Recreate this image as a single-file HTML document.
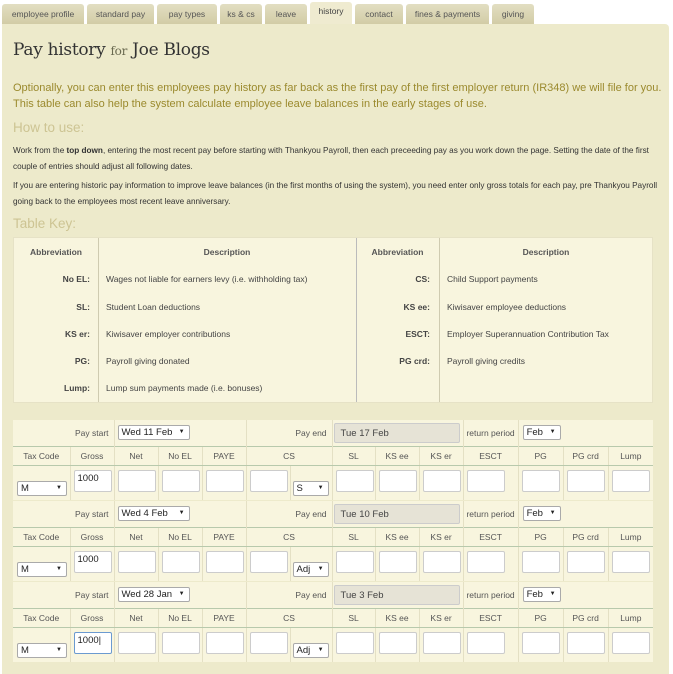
<!DOCTYPE html>
<html><head><meta charset="utf-8"><style>
*{box-sizing:border-box;margin:0;padding:0}
body{width:673px;height:663px;overflow:hidden;background:#fff;font-family:"Liberation Sans",sans-serif;position:relative}
.tabs{position:absolute;top:4px;left:2px;height:20px}
.tab{position:absolute;top:0;height:20px;background:linear-gradient(#e2dec2,#d2cca6);border-radius:3px 3px 0 0;font-size:8.5px;color:#555;text-align:center;line-height:20px}
.tab.on{background:#efebd0;top:-2px;height:22px;line-height:18px;color:#444}
.panel{position:absolute;left:2px;top:24px;width:667px;height:650px;background:#edeacb;border-radius:0 4px 0 0}
h1{position:absolute;left:13px;top:40px;font-family:"DejaVu Serif","Liberation Serif",serif;font-weight:normal;font-size:17px;color:#333;letter-spacing:-0.3px}
h1 small{font-size:12px;color:#6a6a50}
.intro{position:absolute;left:13px;top:80px;width:650px;font-size:11px;line-height:16px;color:#9b8a2e}
h2{position:absolute;left:13px;font-weight:normal;font-size:13.5px;color:#cdc493}
.p{position:absolute;left:13px;width:655px;font-size:8.2px;line-height:15.5px;color:#333}
.key{position:absolute;left:13px;top:237px;width:640px;height:166px;background:#f8f5de;border:1px solid #e6e2c6;font-size:8.5px;color:#444}
.key div{position:absolute}
.key b{font-weight:bold}
.vl{position:absolute;top:0;width:1px;height:164px;background:#cfcbb0}
table{position:absolute;left:13px;width:640px;border-collapse:collapse;table-layout:fixed;background:#f8f5de;font-size:8.5px;color:#555}
td{border-left:1px solid #e4e0c4;text-align:center;padding:0;vertical-align:middle}
tr.ps td{height:26px}
tr.ps td.r{text-align:right;padding-right:5px}
tr.hd td{height:19px;border-top:1.5px solid #b8c9ac;border-bottom:1.5px solid #b8c9ac}
tr.in td{height:35px;position:relative}
.sel{display:inline-block;background:#fff;border:1px solid #aaa;border-radius:2px;font-size:9.5px;color:#222;text-align:left;padding-left:3px;position:relative;height:15px;line-height:13px}
.sel:after{content:"▼";position:absolute;right:4px;top:0;font-size:6px}
.box{position:absolute;left:3px;top:4px;width:38px;height:22px;background:#fff;border:1px solid #ccc;border-radius:2px;font-size:9.5px;color:#222;text-align:left;padding:2px 3px}
.dis{display:inline-block;width:126px;height:20px;background:#e6e3d6;border:1px solid #ccc;border-radius:2px;font-size:9.5px;color:#444;text-align:left;padding:4px 6px;line-height:11px}
</style></head><body>
<div class="tabs">
<div class="tab" style="left:0;width:82px">employee profile</div>
<div class="tab" style="left:85px;width:67px">standard pay</div>
<div class="tab" style="left:155px;width:60px">pay types</div>
<div class="tab" style="left:218px;width:42px">ks &amp; cs</div>
<div class="tab" style="left:263px;width:42px">leave</div>
<div class="tab on" style="left:308px;width:42px">history</div>
<div class="tab" style="left:353px;width:48px">contact</div>
<div class="tab" style="left:404px;width:83px">fines &amp; payments</div>
<div class="tab" style="left:490px;width:42px">giving</div>
</div>
<div class="panel"></div>
<h1>Pay history <small>for</small> Joe Blogs</h1>
<div class="intro">Optionally, you can enter this employees pay history as far back as the first pay of the first employer return (IR348) we will file for you. This table can also help the system calculate employee leave balances in the early stages of use.</div>
<h2 style="top:120px">How to use:</h2>
<div class="p" style="top:143px">Work from the <b>top down</b>, entering the most recent pay before starting with Thankyou Payroll, then each preceeding pay as you work down the page. Setting the date of the first couple of entries should adjust all following dates.</div>
<div class="p" style="top:178px">If you are entering historic pay information to improve leave balances (in the first months of using the system), you need enter only gross totals for each pay, pre Thankyou Payroll going back to the employees most recent leave anniversary.</div>
<h2 style="top:216px">Table Key:</h2>
<div class="key">
<div class="vl" style="left:84px"></div><div class="vl" style="left:342px;background:#bbb"></div><div class="vl" style="left:425px"></div>
<div style="left:0;width:84px;top:9px;text-align:center;font-weight:bold;color:#555">Abbreviation</div><div style="left:84px;width:258px;top:9px;text-align:center;font-weight:bold;color:#555">Description</div>
<div style="left:342px;width:83px;top:9px;text-align:center;font-weight:bold;color:#555">Abbreviation</div><div style="left:425px;width:214px;top:9px;text-align:center;font-weight:bold;color:#555">Description</div>
<div style="right:562px;top:36px;font-weight:bold">No EL:</div><div style="left:92px;top:36px">Wages not liable for earners levy (i.e. withholding tax)</div>
<div style="right:562px;top:64px;font-weight:bold">SL:</div><div style="left:92px;top:64px">Student Loan deductions</div>
<div style="right:562px;top:91px;font-weight:bold">KS er:</div><div style="left:92px;top:91px">Kiwisaver employer contributions</div>
<div style="right:562px;top:118px;font-weight:bold">PG:</div><div style="left:92px;top:118px">Payroll giving donated</div>
<div style="right:562px;top:145px;font-weight:bold">Lump:</div><div style="left:92px;top:145px">Lump sum payments made (i.e. bonuses)</div>
<div style="right:222px;top:36px;font-weight:bold">CS:</div><div style="left:433px;top:36px">Child Support payments</div>
<div style="right:222px;top:64px;font-weight:bold">KS ee:</div><div style="left:433px;top:64px">Kiwisaver employee deductions</div>
<div style="right:222px;top:91px;font-weight:bold">ESCT:</div><div style="left:433px;top:91px">Employer Superannuation Contribution Tax</div>
<div style="right:222px;top:118px;font-weight:bold">PG crd:</div><div style="left:433px;top:118px">Payroll giving credits</div>
</div>

<table style="top:420px">
<colgroup><col style="width:57px"><col style="width:44px"><col style="width:44px"><col style="width:44px"><col style="width:44px"><col style="width:44px"><col style="width:42px"><col style="width:43px"><col style="width:44px"><col style="width:44px"><col style="width:55px"><col style="width:45px"><col style="width:45px"><col style="width:45px"></colgroup>
<tr class="ps"><td colspan="2" class="r" style="border-left:0">Pay start</td><td colspan="3" style="text-align:left;padding-left:3px"><span class="sel" style="width:72px">Wed 11 Feb</span></td><td colspan="2" class="r">Pay end</td><td colspan="3" style="text-align:left;padding-left:1px"><span class="dis">Tue 17 Feb</span></td><td>return period</td><td colspan="3" style="text-align:left;padding-left:4px"><span class="sel" style="width:38px">Feb</span></td></tr>
<tr class="hd"><td style="border-left:0">Tax Code</td><td>Gross</td><td>Net</td><td>No EL</td><td>PAYE</td><td colspan="2">CS</td><td>SL</td><td>KS ee</td><td>KS er</td><td>ESCT</td><td>PG</td><td>PG crd</td><td>Lump</td></tr>
<tr class="in"><td style="border-left:0;text-align:left;padding:12px 0 0 4px"><span class="sel" style="width:50px">M</span></td><td><div class="box">1000</div></td><td><div class="box"></div></td><td><div class="box"></div></td><td><div class="box"></div></td><td><div class="box"></div></td><td style="text-align:left;padding:12px 0 0 2px"><span class="sel" style="width:36px">S</span></td><td><div class="box"></div></td><td><div class="box"></div></td><td><div class="box"></div></td><td><div class="box"></div></td><td><div class="box"></div></td><td><div class="box"></div></td><td><div class="box"></div></td></tr>
</table>

<table style="top:501px">
<colgroup><col style="width:57px"><col style="width:44px"><col style="width:44px"><col style="width:44px"><col style="width:44px"><col style="width:44px"><col style="width:42px"><col style="width:43px"><col style="width:44px"><col style="width:44px"><col style="width:55px"><col style="width:45px"><col style="width:45px"><col style="width:45px"></colgroup>
<tr class="ps"><td colspan="2" class="r" style="border-left:0">Pay start</td><td colspan="3" style="text-align:left;padding-left:3px"><span class="sel" style="width:72px">Wed 4 Feb</span></td><td colspan="2" class="r">Pay end</td><td colspan="3" style="text-align:left;padding-left:1px"><span class="dis">Tue 10 Feb</span></td><td>return period</td><td colspan="3" style="text-align:left;padding-left:4px"><span class="sel" style="width:38px">Feb</span></td></tr>
<tr class="hd"><td style="border-left:0">Tax Code</td><td>Gross</td><td>Net</td><td>No EL</td><td>PAYE</td><td colspan="2">CS</td><td>SL</td><td>KS ee</td><td>KS er</td><td>ESCT</td><td>PG</td><td>PG crd</td><td>Lump</td></tr>
<tr class="in"><td style="border-left:0;text-align:left;padding:12px 0 0 4px"><span class="sel" style="width:50px">M</span></td><td><div class="box">1000</div></td><td><div class="box"></div></td><td><div class="box"></div></td><td><div class="box"></div></td><td><div class="box"></div></td><td style="text-align:left;padding:12px 0 0 2px"><span class="sel" style="width:36px">Adj</span></td><td><div class="box"></div></td><td><div class="box"></div></td><td><div class="box"></div></td><td><div class="box"></div></td><td><div class="box"></div></td><td><div class="box"></div></td><td><div class="box"></div></td></tr>
</table>

<table style="top:582px">
<colgroup><col style="width:57px"><col style="width:44px"><col style="width:44px"><col style="width:44px"><col style="width:44px"><col style="width:44px"><col style="width:42px"><col style="width:43px"><col style="width:44px"><col style="width:44px"><col style="width:55px"><col style="width:45px"><col style="width:45px"><col style="width:45px"></colgroup>
<tr class="ps"><td colspan="2" class="r" style="border-left:0">Pay start</td><td colspan="3" style="text-align:left;padding-left:3px"><span class="sel" style="width:72px">Wed 28 Jan</span></td><td colspan="2" class="r">Pay end</td><td colspan="3" style="text-align:left;padding-left:1px"><span class="dis">Tue 3 Feb</span></td><td>return period</td><td colspan="3" style="text-align:left;padding-left:4px"><span class="sel" style="width:38px">Feb</span></td></tr>
<tr class="hd"><td style="border-left:0">Tax Code</td><td>Gross</td><td>Net</td><td>No EL</td><td>PAYE</td><td colspan="2">CS</td><td>SL</td><td>KS ee</td><td>KS er</td><td>ESCT</td><td>PG</td><td>PG crd</td><td>Lump</td></tr>
<tr class="in"><td style="border-left:0;text-align:left;padding:12px 0 0 4px"><span class="sel" style="width:50px">M</span></td><td><div class="box" style="border-color:#6b9ad0">1000|</div></td><td><div class="box"></div></td><td><div class="box"></div></td><td><div class="box"></div></td><td><div class="box"></div></td><td style="text-align:left;padding:12px 0 0 2px"><span class="sel" style="width:36px">Adj</span></td><td><div class="box"></div></td><td><div class="box"></div></td><td><div class="box"></div></td><td><div class="box"></div></td><td><div class="box"></div></td><td><div class="box"></div></td><td><div class="box"></div></td></tr>
</table>
</body></html>
